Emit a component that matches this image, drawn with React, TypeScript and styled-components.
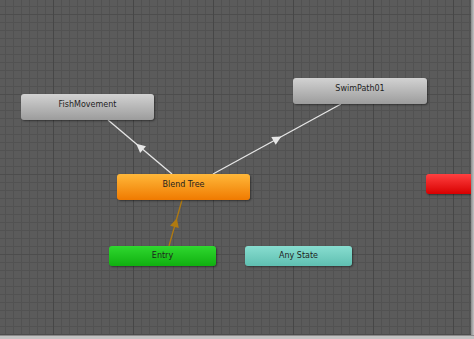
import styled, { createGlobalStyle } from "styled-components";

const Global = createGlobalStyle`
  html, body {
    margin: 0;
    padding: 0;
    background: #585858;
    overflow: hidden;
  }
`;

const Window = styled.div`
  width: 474px;
  height: 339px;
  display: flex;
  flex-direction: column;
  background: #b9b9b9;
`;

const Row = styled.div`
  flex: 1;
  display: flex;
  min-height: 0;
`;

const Canvas = styled.div`
  position: relative;
  flex: 1;
  overflow: hidden;
  background-color: #5b5b5b;
  background-image:
    linear-gradient(to right, #474747 1px, transparent 1px),
    linear-gradient(to bottom, #4d4d4d 1px, transparent 1px),
    linear-gradient(to right, #525252 1px, transparent 1px),
    linear-gradient(to bottom, #525252 1px, transparent 1px);
  background-size: 80px 80px, 80px 80px, 8px 8px, 8px 8px;
  background-position: 53px 14px, 53px 14px, 5px 6px, 5px 6px;
`;

const SideStrip = styled.div`
  width: 3px;
  background: linear-gradient(to right, #8c8c8c, #c4c4c4);
`;

const BottomStrip = styled.div`
  height: 3px;
  background: #c2c2c2;
  border-top: 1px solid #8a8a8a;
`;

type Kind = "gray" | "orange" | "green" | "teal" | "red";

const fills: Record<Kind, string> = {
  gray: "linear-gradient(to bottom, #d2d2d2, #9c9c9c)",
  orange: "linear-gradient(to bottom, #ffb83a, #f07a00)",
  green: "linear-gradient(to bottom, #2fd82f, #10b010)",
  teal: "linear-gradient(to bottom, #88ddd0, #5fbfb1)",
  red: "linear-gradient(to bottom, #ff4040, #d80000)",
};

const Node = styled.div<{ $kind: Kind }>`
  position: absolute;
  box-sizing: border-box;
  display: flex;
  justify-content: center;
  align-items: flex-start;
  padding-top: 6px;
  border-radius: 3px;
  background: ${(p) => fills[p.$kind]};
  box-shadow: 1px 1px 2px rgba(0, 0, 0, 0.45);
  font-family: "DejaVu Sans", Verdana, sans-serif;
  font-size: 8px;
  color: #1e1e1e;
  white-space: nowrap;
`;

const Edges = styled.svg`
  position: absolute;
  left: 0;
  top: 0;
  pointer-events: none;
`;

const nodes: { label: string; kind: Kind; x: number; y: number; w: number; h: number; pad?: number }[] = [
  { label: "FishMovement", kind: "gray", x: 21, y: 94, w: 133, h: 26 },
  { label: "SwimPath01", kind: "gray", x: 293, y: 78, w: 134, h: 26 },
  { label: "Blend Tree", kind: "orange", x: 117, y: 174, w: 133, h: 26 },
  { label: "Entry", kind: "green", x: 109, y: 246, w: 107, h: 20, pad: 5 },
  { label: "Any State", kind: "teal", x: 245, y: 246, w: 107, h: 20, pad: 5 },
  { label: "", kind: "red", x: 426, y: 174, w: 80, h: 20 },
];

function Arrow({ x1, y1, x2, y2, color }: { x1: number; y1: number; x2: number; y2: number; color: string }) {
  const mx = (x1 + x2) / 2;
  const my = (y1 + y2) / 2;
  const a = (Math.atan2(y2 - y1, x2 - x1) * 180) / Math.PI;
  return (
    <g>
      <line x1={x1} y1={y1} x2={x2} y2={y2} stroke={color} strokeWidth={1.3} />
      <polygon points="5,0 -4,-4.5 -4,4.5" fill={color} transform={`translate(${mx} ${my}) rotate(${a})`} />
    </g>
  );
}

export default function App() {
  return (
    <Window>
      <Global />
      <Row>
        <Canvas>
          <Edges width="471" height="336">
            <Arrow x1={172} y1={174} x2={108} y2={120} color="#e6e6e6" />
            <Arrow x1={213} y1={174} x2={341} y2={104} color="#e6e6e6" />
            <Arrow x1={169} y1={246} x2={182} y2={200} color="#b07a10" />
          </Edges>
          {nodes.map((n) => (
            <Node
              key={n.kind + n.x}
              $kind={n.kind}
              style={{ left: n.x, top: n.y, width: n.w, height: n.h, paddingTop: n.pad }}
            >
              {n.label}
            </Node>
          ))}
        </Canvas>
        <SideStrip />
      </Row>
      <BottomStrip />
    </Window>
  );
}
